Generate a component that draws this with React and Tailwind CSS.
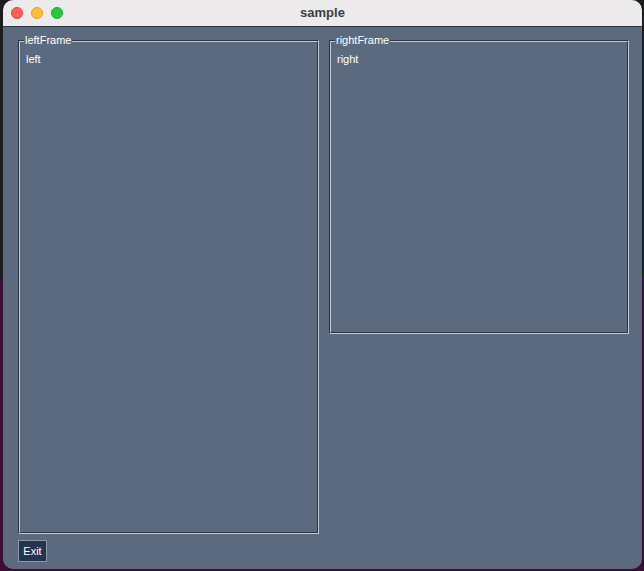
import React from "react";

function Frame({ label, text, className }) {
  return (
    <div className={`relative border border-t-[#2c3544] border-l-[#2c3544] border-b-[#c3c9d2] border-r-[#c3c9d2] ${className}`}>
      <div className="h-full w-full border border-t-[#c3c9d2] border-l-[#c3c9d2] border-b-[#2c3544] border-r-[#2c3544] pl-[6px] pt-[4px]">
        <span className="text-[11px] leading-[14px] text-white">{text}</span>
      </div>
      <span className="absolute left-[5px] top-[-8px] bg-[#5b6a7e] px-[1px] text-[11px] leading-[14px] text-white">
        {label}
      </span>
    </div>
  );
}

export default function App() {
  return (
    <div className="relative h-[571px] w-[644px] overflow-hidden bg-[#1d1d1f]" style={{ fontFamily: '"Liberation Sans", Arial, sans-serif' }}>
      <div className="absolute left-0 right-0 top-[278px] bottom-0 bg-[#3a0f33]" />
      <div className="absolute left-[3px] top-0 flex h-[569px] w-[639px] flex-col overflow-hidden rounded-[10px]">
        <div className="relative flex h-[27px] shrink-0 items-center border-b border-[#2a303c] bg-[#eceaeb]">
          <div className="absolute left-[8px] top-[7px] flex gap-[8px]">
            <span className="h-[12px] w-[12px] rounded-full bg-[#fe5f57] border border-[#e0443e]" />
            <span className="h-[12px] w-[12px] rounded-full bg-[#febc2e] border border-[#dea123]" />
            <span className="h-[12px] w-[12px] rounded-full bg-[#28c840] border border-[#1aab29]" />
          </div>
          <div className="w-full text-center text-[13px] font-bold text-[#3d3d3d]">sample</div>
        </div>
        <div className="flex flex-1 flex-col bg-[#5b6a7e] pl-[15px] pt-[13px]">
          <div className="flex items-start gap-[10px]">
            <Frame label="leftFrame" text="left" className="h-[494px] w-[301px]" />
            <Frame label="rightFrame" text="right" className="h-[294px] w-[300px]" />
          </div>
          <div className="mt-[6px]">
            <button className="flex h-[22px] w-[29px] items-center justify-center border border-[#8b96a6] bg-[#243450] text-[11px] text-white">
              Exit
            </button>
          </div>
        </div>
      </div>
    </div>
  );
}
